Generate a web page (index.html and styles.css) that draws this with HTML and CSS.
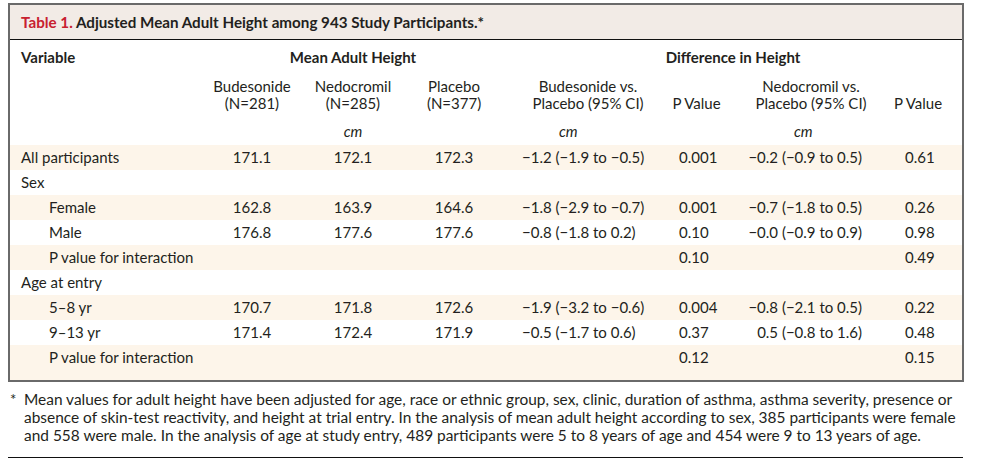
FILE: index.html
```html
<!DOCTYPE html>
<html>
<head>
<meta charset="utf-8">
<link rel="stylesheet" href="styles.css">
</head>
<body>
<div class="box">
  <div class="title"><span class="tlabel">Table 1.</span> Adjusted Mean Adult Height among 943 Study Participants.*</div>
  <table class="tbl">
    <colgroup>
      <col class="c1"><col class="c2"><col class="c3"><col class="c4"><col class="c5"><col class="c6"><col class="c7"><col class="c8">
    </colgroup>
    <thead>
      <tr class="h1">
        <th class="var">Variable</th>
        <th colspan="3">Mean Adult Height</th>
        <th colspan="4" class="diff">Difference in Height</th>
      </tr>
      <tr class="h2">
        <th></th>
        <th>Budesonide<br>(N=281)</th>
        <th>Nedocromil<br>(N=285)</th>
        <th>Placebo<br>(N=377)</th>
        <th class="b5">Budesonide vs.<br>Placebo (95% CI)</th>
        <th>P Value</th>
        <th>Nedocromil vs.<br>Placebo (95% CI)</th>
        <th class="b8">P Value</th>
      </tr>
      <tr class="h3">
        <th></th>
        <th colspan="3" class="cm">cm</th>
        <th class="cm cm5">cm</th>
        <th></th>
        <th class="cm cm7">cm</th>
        <th></th>
      </tr>
    </thead>
    <tbody>
      <tr class="hl"><td class="var">All participants</td><td>171.1</td><td>172.1</td><td>172.3</td><td class="d5">−1.2 (−1.9 to −0.5)</td><td class="d6">0.001</td><td class="d7">−0.2 (−0.9 to 0.5)</td><td class="d8">0.61</td></tr>
      <tr><td class="var">Sex</td><td></td><td></td><td></td><td class="d5"></td><td class="d6"></td><td class="d7"></td><td class="d8"></td></tr>
      <tr class="hl"><td class="var sub">Female</td><td>162.8</td><td>163.9</td><td>164.6</td><td class="d5">−1.8 (−2.9 to −0.7)</td><td class="d6">0.001</td><td class="d7">−0.7 (−1.8 to 0.5)</td><td class="d8">0.26</td></tr>
      <tr><td class="var sub">Male</td><td>176.8</td><td>177.6</td><td>177.6</td><td class="d5">−0.8 (−1.8 to 0.2)</td><td class="d6">0.10</td><td class="d7">−0.0 (−0.9 to 0.9)</td><td class="d8">0.98</td></tr>
      <tr class="hl"><td class="var sub">P value for interaction</td><td></td><td></td><td></td><td class="d5"></td><td class="d6">0.10</td><td class="d7"></td><td class="d8">0.49</td></tr>
      <tr><td class="var">Age at entry</td><td></td><td></td><td></td><td class="d5"></td><td class="d6"></td><td class="d7"></td><td class="d8"></td></tr>
      <tr class="hl"><td class="var sub">5–8 yr</td><td>170.7</td><td>171.8</td><td>172.6</td><td class="d5">−1.9 (−3.2 to −0.6)</td><td class="d6">0.004</td><td class="d7">−0.8 (−2.1 to 0.5)</td><td class="d8">0.22</td></tr>
      <tr><td class="var sub">9–13 yr</td><td>171.4</td><td>172.4</td><td>171.9</td><td class="d5">−0.5 (−1.7 to 0.6)</td><td class="d6">0.37</td><td class="d7">0.5 (−0.8 to 1.6)</td><td class="d8">0.48</td></tr>
      <tr class="hl last"><td class="var sub">P value for interaction</td><td></td><td></td><td></td><td class="d5"></td><td class="d6">0.12</td><td class="d7"></td><td class="d8">0.15</td></tr>
    </tbody>
  </table>
</div>
<div class="note">
  <span class="star">*</span>
  <p>Mean values for adult height have been adjusted for age, race or ethnic group, sex, clinic, duration of asthma, asthma severity, presence or absence of skin-test reactivity, and height at trial entry. In the analysis of mean adult height according to sex, 385 participants were female and 558 were male. In the analysis of age at study entry, 489 participants were 5 to 8 years of age and 454 were 9 to 13 years of age.</p>
</div>
</body>
</html>
```
FILE: styles.css
```css
html, body {
  margin: 0;
  background: #ffffff;
}
body {
  padding: 3px 0 0 8px;
  font-family: "Lato", "Liberation Sans", sans-serif;
  font-size: 15px;
  color: #231f20;
}
.box {
  width: 952px;
  border: 2px solid #6a6a6a;
}
.title {
  background: #f2ebe6;
  height: 34px;
  line-height: 34px;
  padding-left: 11px;
  font-weight: 700;
  font-size: 15.2px;
  border-bottom: 1.5px solid #111;
}
.tlabel {
  color: #c8202f;
}
.tbl {
  width: 952px;
  border-collapse: collapse;
  table-layout: fixed;
}
.c1 { width: 192px; }
.c2 { width: 100px; }
.c3 { width: 102px; }
.c4 { width: 100px; }
.c5 { width: 154px; }
.c6 { width: 77px; }
.c7 { width: 152px; }
.c8 { width: 75px; }
.tbl th, .tbl td {
  padding: 0;
  white-space: nowrap;
  text-align: center;
  font-weight: 400;
  line-height: 17px;
}
.tbl th.var, .tbl td.var {
  text-align: left;
  padding-left: 11px;
}
.tbl td.sub {
  padding-left: 39px;
}
.h1 th {
  font-weight: 700;
  padding-top: 9px;
  height: 17px;
}
.h1 th.var { padding-left: 11px; }
.h2 th {
  padding-top: 12px;
  vertical-align: bottom;
}
.h2 th.b5 { padding-left: 14px; }
.h2 th.b8 { padding-right: 13px; }
.h3 th {
  padding-top: 11px;
  padding-bottom: 5px;
  height: 17px;
}
.cm { font-style: italic; }
.tbl th.cm5 { text-align: left; padding-left: 55px; }
.tbl th.cm7 { text-align: left; padding-left: 59px; }
.tbl tbody td {
  height: 25px;
  line-height: 25px;
  vertical-align: top;
}
.tbl tbody tr.hl td {
  background: #fdf5ea;
}
.tbl tbody tr.last td {
  height: 35px;
}
.tbl td.d5 { text-align: left; padding-left: 18px; }
.tbl td.d6 { text-align: left; padding-left: 21px; }
.tbl td.d7 { text-align: right; padding-right: 25px; }
.tbl td.d8 { text-align: left; padding-left: 18px; }
.note {
  display: flex;
  width: 955px;
  margin-top: 8px;
  border-bottom: 1px solid #111;
  padding-bottom: 13px;
}
.star {
  width: 14px;
  padding-left: 2px;
  line-height: 18px;
}
.note p {
  margin: 0;
  flex: 1;
  line-height: 18px;
  font-size: 15.45px;
}
```
